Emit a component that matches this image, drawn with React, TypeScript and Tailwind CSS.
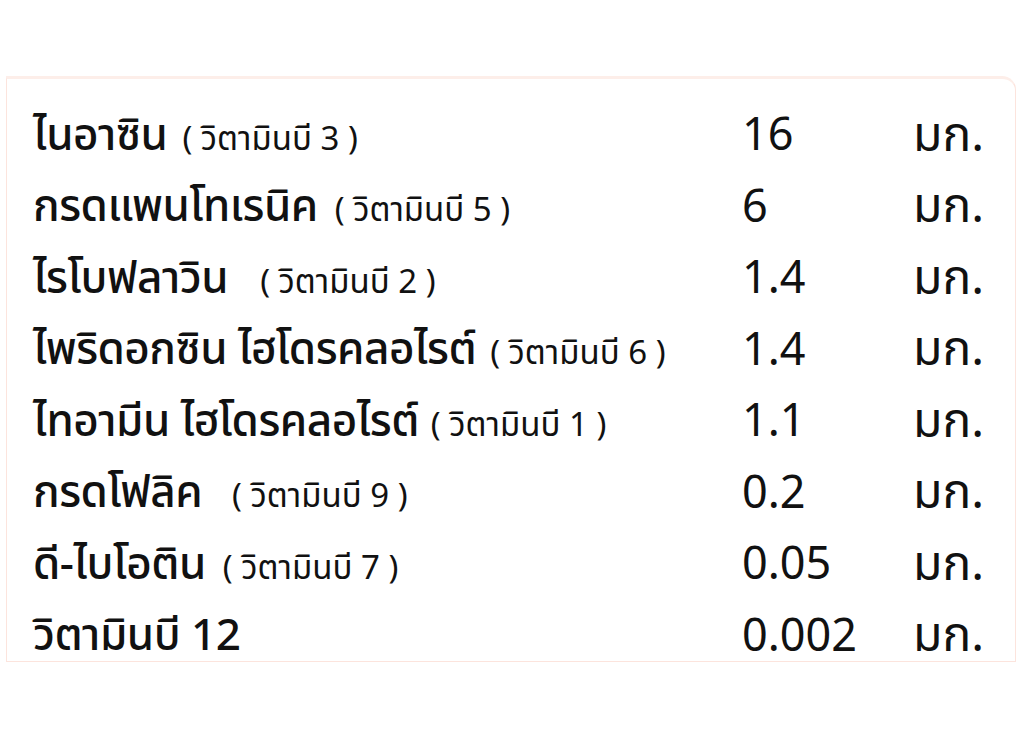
const ROWS = [
  { name: "ไนอาซิน", note: "( วิตามินบี 3 )", gap: "ml-[15px]", value: "16" },
  { name: "กรดแพนโทเรนิค", note: "( วิตามินบี 5 )", gap: "ml-[17px]", value: "6" },
  { name: "ไรโบฟลาวิน", note: "( วิตามินบี 2 )", gap: "ml-[32px]", value: "1.4" },
  { name: "ไพริดอกซิน ไฮโดรคลอไรต์", note: "( วิตามินบี 6 )", gap: "ml-[14px]", value: "1.4" },
  { name: "ไทอามีน ไฮโดรคลอไรต์", note: "( วิตามินบี 1 )", gap: "ml-[12px]", value: "1.1" },
  { name: "กรดโฟลิค", note: "( วิตามินบี 9 )", gap: "ml-[30px]", value: "0.2" },
  { name: "ดี-ไบโอติน", note: "( วิตามินบี 7 )", gap: "ml-[17px]", value: "0.05" },
  { name: "วิตามินบี 12", note: "", gap: "", value: "0.002" },
];

export default function App() {
  return (
    <div
      className="w-[1024px] h-[731px] bg-white pt-[76px] pl-[6px]"
      style={{ fontFamily: '"Noto Sans Thai", "Noto Sans", "DejaVu Sans", sans-serif' }}
    >
      <div className="w-[1010px] h-[586px] border border-[#fce4dd] border-t-[3px] border-t-[#fdeee9] rounded-tr-[14px] pt-[22px] text-[#111]">
        {ROWS.map((r) => (
          <div key={r.value + r.name} className="flex items-center h-[71.5px]">
            <div className="w-[735px] pl-[26px] flex items-baseline whitespace-nowrap">
              <span className="text-[44px] leading-none font-medium tracking-[-0.5px]">{r.name}</span>
              {r.note && (
                <span className={`${r.gap} text-[33px] leading-none`}>{r.note}</span>
              )}
            </div>
            <div className="w-[171px] text-[45px] leading-none">{r.value}</div>
            <div className="text-[48px] leading-none">มก.</div>
          </div>
        ))}
      </div>
    </div>
  );
}
